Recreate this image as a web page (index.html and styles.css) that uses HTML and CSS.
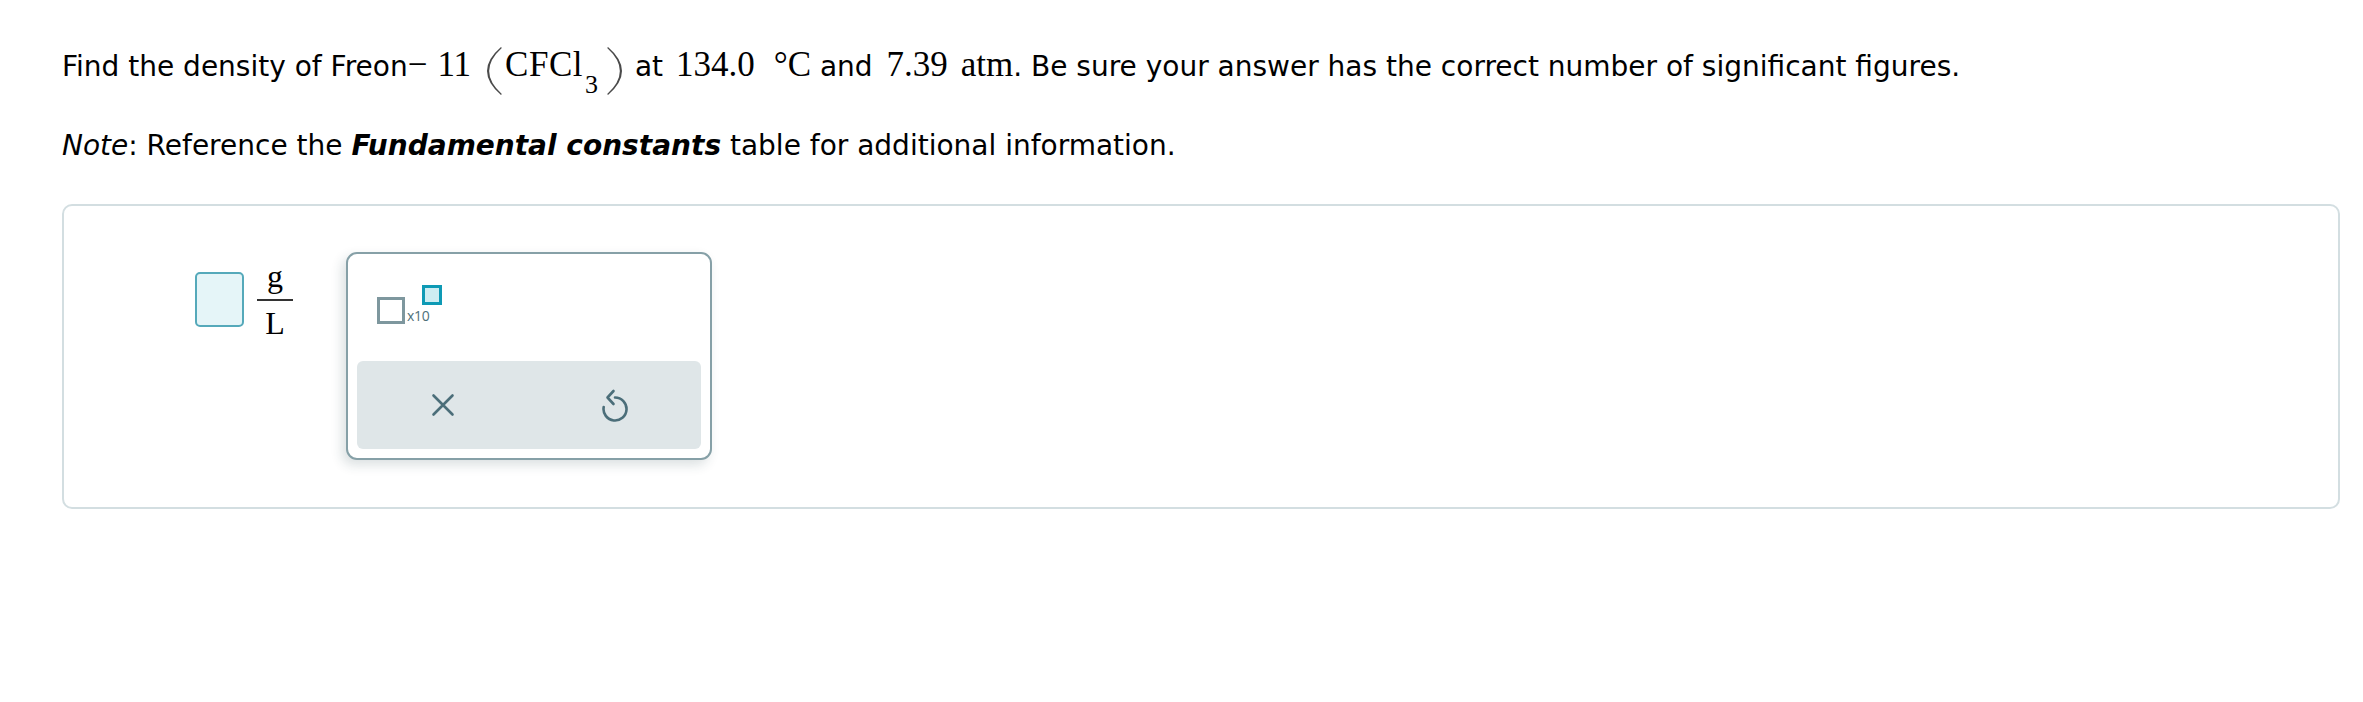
FILE: index.html
```html
<!DOCTYPE html>
<html lang="en">
<head>
<meta charset="utf-8">
<title>Freon-11 density</title>
<link rel="stylesheet" href="styles.css">
</head>
<body>
<div class="page">
  <p class="q">Find the density of Freon<span class="math minus">−</span><span class="math num11">11</span><span class="math chem"><svg class="paren lp" viewBox="0 0 16 50" width="16" height="50"><path d="M15 1 Q-13 25 15 49 L15.8 48 Q-9.5 25 15.8 2 Z"/></svg><span class="letters">CFCl</span><span class="sub">3</span><svg class="paren rp" viewBox="0 0 16 50" width="16" height="50"><path d="M1 1 Q29 25 1 49 L0.2 48 Q25.5 25 0.2 2 Z"/></svg></span> at <span class="math val">134.0</span><span class="math deg">°C</span> and <span class="math val2">7.39</span><span class="math atm">atm</span>. Be sure your answer has the correct number of significant figures.</p>
  <p class="q note"><em>Note</em>: Reference the <strong><em>Fundamental constants</em></strong> table for additional information.</p>

  <div class="answer">
    <div class="entry">
      <div class="input-box"></div>
      <div class="frac">
        <span class="num">g</span>
        <span class="bar"></span>
        <span class="den">L</span>
      </div>
    </div>

    <div class="popup">
      <div class="sci">
        <span class="mant"></span>
        <span class="x10">x10</span>
        <span class="expo"></span>
      </div>
      <div class="actions">
        <span class="act">
          <svg width="24" height="24" viewBox="0 0 24 24"><path d="M2.5 2.5 L21.5 21.5 M21.5 2.5 L2.5 21.5"/></svg>
        </span>
        <span class="act">
          <svg width="26" height="34" viewBox="0 0 26 34"><path d="M13 9.5 A11.5 11.5 0 1 1 1.7 19"/><path d="M11.5 3 L5.5 9.5 L11.5 16"/></svg>
        </span>
      </div>
    </div>
  </div>
</div>
</body>
</html>
```

FILE: styles.css
```css
* { box-sizing: border-box; }

html, body {
  margin: 0;
  padding: 0;
  background: #ffffff;
}

.page {
  padding: 47px 23px 0 62px;
  font-family: "DejaVu Sans", Verdana, sans-serif;
  color: #000;
}

.q {
  margin: 0;
  font-size: 28px;
  line-height: 40px;
  white-space: nowrap;
}

.note {
  margin-top: 39px;
}

.note strong em {
  font-weight: bold;
}

.math {
  font-family: "Liberation Serif", "Times New Roman", serif;
  font-size: 35px;
  line-height: 1;
}

.minus {
  margin: 0 10px 0 0;
}

.num11 {
  margin-right: 15px;
}

.chem {
  margin-right: 3px;
}

.paren {
  display: inline-block;
  vertical-align: -8px;
  margin: -2px 0 -12px 0;
}

.paren path {
  fill: #4a4a4a;
}

.letters {
  margin-left: 3px;
  letter-spacing: 0.5px;
}

.sub {
  font-size: 26px;
  line-height: 0;
  vertical-align: -17px;
  margin-left: 2px;
}

.rp {
  margin-left: 9px;
}

.val {
  margin-left: 4px;
}

.deg {
  margin-left: 19px;
}

.val2 {
  margin-left: 5px;
}

.atm {
  margin-left: 13px;
}

.answer {
  margin-top: 38px;
  border: 2px solid #d3dee1;
  border-radius: 10px;
  padding: 46px 0 45px 131px;
  display: flex;
  align-items: flex-start;
  gap: 53px;
  height: 305px;
}

.entry {
  display: flex;
  align-items: center;
  gap: 13px;
  margin-top: 8px;
}

.input-box {
  width: 49px;
  height: 55px;
  border: 2px solid #55a9ba;
  border-radius: 5px;
  background: #e5f5f8;
}

.frac {
  display: flex;
  flex-direction: column;
  align-items: center;
  font-family: "Liberation Serif", "Times New Roman", serif;
  font-size: 32px;
  line-height: 32px;
}

.num {
  padding-bottom: 7px;
}

.bar {
  width: 36px;
  height: 2px;
  background: #333;
}

.den {
  padding-top: 6px;
}

.popup {
  width: 366px;
  height: 208px;
  border: 2px solid #86a0a7;
  border-radius: 11px;
  background: #fff;
  box-shadow: -4px 5px 12px rgba(30, 60, 70, 0.16);
  display: flex;
  flex-direction: column;
}

.sci {
  height: 107px;
  padding: 31px 0 0 29px;
  display: flex;
  align-items: flex-start;
}

.mant {
  width: 28px;
  height: 27px;
  margin-top: 12px;
  border: 3px solid #7e979e;
  background: #fff;
}

.x10 {
  margin: 24px 0 0 2px;
  font-family: "Open Sans", "Lato", sans-serif;
  font-size: 14px;
  line-height: 14px;
  color: #4d6f79;
  letter-spacing: -0.3px;
}

.expo {
  width: 20px;
  height: 20px;
  margin-left: -7px;
  border: 3px solid #0e9ab5;
  background: #cdedf2;
}

.actions {
  height: 88px;
  margin: 0 9px 9px;
  background: #dfe6e8;
  border-radius: 6px;
  display: grid;
  grid-template-columns: 1fr 1fr;
  align-items: center;
  justify-items: center;
}

.act {
  display: flex;
}

.act svg path {
  fill: none;
  stroke: #4b6e79;
  stroke-width: 2.6;
  stroke-linecap: round;
  stroke-linejoin: round;
}
```
